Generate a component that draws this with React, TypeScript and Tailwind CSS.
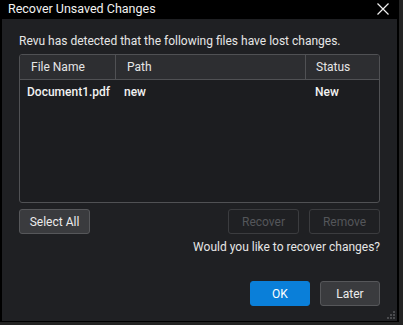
import React from 'react';

function Btn({ children, disabled, primary, className = '' }: { children: React.ReactNode; disabled?: boolean; primary?: boolean; className?: string }) {
    const base = 'h-[25px] rounded-[3px] flex items-center justify-center text-[12px] border';
    const look = primary
        ? 'bg-[#0a7fd9] border-[#0a7fd9] text-white'
        : disabled
            ? 'bg-transparent border-[#3b3c3f] text-[#54565a]'
            : 'bg-[#3a3b3e] border-[#56575a] text-[#ececec]';
    return <div className={`${base} ${look} ${className}`}>{children}</div>;
}

export default function App() {
    return (
        <div className="w-[403px] h-[325px] bg-[#232323] overflow-hidden" style={{ fontFamily: 'Roboto, "Liberation Sans", sans-serif' }}>
            <div className="w-[399px] h-[322px] bg-black flex flex-col">
                {/* Title bar */}
                <div className="h-[19px] flex items-center justify-between pl-[8px] pr-[10px] shrink-0">
                    <span className="text-[12.5px] text-[#f2f2f2] leading-none">Recover Unsaved Changes</span>
                    <svg width="12" height="12" viewBox="0 0 12 12" className="mt-[-2px]">
                        <path d="M0.5 0.5 L11.5 11.5 M11.5 0.5 L0.5 11.5" stroke="#f0f0f0" strokeWidth="1.2" />
                    </svg>
                </div>

                {/* Body */}
                <div className="flex-1 mx-[2px] mb-[1px] bg-[#1f2023] relative flex flex-col px-[17px]">
                    <p className="text-[12px] text-[#e6e6e6] mt-[15px] leading-[15px]">Revu has detected that the following files have lost changes.</p>

                    {/* Table */}
                    <div className="mt-[5px] h-[149px] border border-[#505154] rounded-[3px] bg-[#1c1d20] overflow-hidden">
                        <div className="flex h-[25px] bg-[#2d2e31] border-b border-[#505154] text-[12px] text-[#e6e6e6]">
                            <div className="w-[96px] border-r border-[#505154] flex items-center pl-[11px]">File Name</div>
                            <div className="w-[190px] border-r border-[#505154] flex items-center pl-[11px]">Path</div>
                            <div className="flex-1 flex items-center pl-[10px]">Status</div>
                        </div>
                        <div className="flex h-[24px] text-[12px] font-medium text-[#f2f2f2]">
                            <div className="w-[96px] flex items-center pl-[7px]">Document1.pdf</div>
                            <div className="w-[190px] flex items-center pl-[8px]">new</div>
                            <div className="flex-1 flex items-center pl-[9px]">New</div>
                        </div>
                    </div>

                    {/* Table actions */}
                    <div className="flex mt-[6px] gap-[10px]">
                        <Btn className="w-[71px]">Select All</Btn>
                        <div className="flex-1" />
                        <Btn disabled className="w-[71px]">Recover</Btn>
                        <Btn disabled className="w-[71px]">Remove</Btn>
                    </div>

                    <p className="text-[12px] text-[#e6e6e6] text-right mt-[6px] leading-[15px]">Would you like to recover changes?</p>

                    <div className="flex justify-end gap-[10px] mt-[26px]">
                        <Btn primary className="w-[60px]">OK</Btn>
                        <Btn className="w-[60px]">Later</Btn>
                    </div>

                    {/* Resize grip */}
                    <svg width="10" height="10" viewBox="0 0 10 10" className="absolute right-[1px] bottom-[1px]">
                        <g fill="#4a4b4e">
                            <rect x="7" y="1" width="2" height="2" />
                            <rect x="4" y="4" width="2" height="2" />
                            <rect x="7" y="4" width="2" height="2" />
                            <rect x="1" y="7" width="2" height="2" />
                            <rect x="4" y="7" width="2" height="2" />
                            <rect x="7" y="7" width="2" height="2" />
                        </g>
                    </svg>
                </div>
            </div>
        </div>
    );
}
